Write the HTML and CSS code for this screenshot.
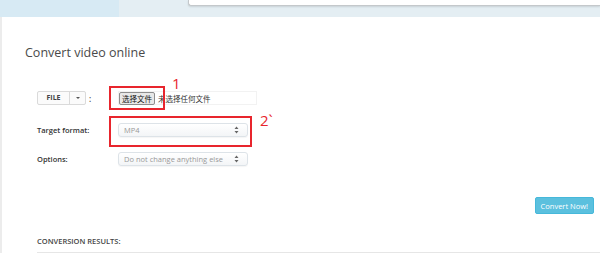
FILE: index.html
```html
<!DOCTYPE html>
<html lang="en">
<head>
  <meta charset="UTF-8" />
  <meta name="viewport" content="width=device-width, initial-scale=1" />
  <title>Convert video online</title>
  <link rel="stylesheet" href="styles.css">
</head>
<body>
  <div class="topbar">
    <div class="topbar-left"></div>
    <div class="topbar-right">
      <div class="search-box"></div>
    </div>
  </div>

  <div class="main">
    <h1 class="page-title">Convert video online</h1>

    <div class="convert-form">
      <div class="form-row row-file">
        <div class="form-label">
          <div class="split-btn">
            <span class="split-main">FILE</span>
            <span class="split-caret"><span class="caret"></span></span>
          </div>
          <span class="colon">:</span>
        </div>
        <div class="file-input">
          <span class="file-btn">选择文件</span>
          <span class="file-name">未选择任何文件</span>
        </div>
      </div>

      <div class="form-row row-target">
        <label class="form-label">Target format:</label>
        <div class="select">
          <span>MP4</span>
          <svg class="select-arrow" width="5" height="8" viewBox="0 0 5 8"><path d="M0.5 3 L2.5 0.5 L4.5 3 Z M0.5 5 L2.5 7.5 L4.5 5 Z" fill="#666"/></svg>
        </div>
      </div>

      <div class="form-row row-options">
        <label class="form-label">Options:</label>
        <div class="select">
          <span>Do not change anything else</span>
          <svg class="select-arrow" width="5" height="8" viewBox="0 0 5 8"><path d="M0.5 3 L2.5 0.5 L4.5 3 Z M0.5 5 L2.5 7.5 L4.5 5 Z" fill="#666"/></svg>
        </div>
      </div>

      <!-- annotations drawn on top of the form -->
      <div class="mark mark-1"></div>
      <span class="mark-num num-1">1</span>
      <div class="mark mark-2"></div>
      <span class="mark-num num-2">2`</span>
    </div>

    <div class="actions">
      <button class="convert-btn">Convert Now!</button>
    </div>

    <div class="results">
      <h4>Conversion results:</h4>
    </div>
  </div>
</body>
</html>
```

FILE: styles.css
```css
* {
  margin: 0;
  padding: 0;
  box-sizing: border-box;
}

body {
  font-family: 'Open Sans', 'Noto Sans CJK SC', sans-serif;
  background-color: #fff;
  color: #333;
  overflow: hidden;
}

.topbar {
  display: flex;
  height: 17px;
}

.topbar-left {
  width: 119px;
  background-color: #d7eaf4;
}

.topbar-right {
  flex: 1;
  background-color: #e4eef3;
  padding-left: 69px;
}

.search-box {
  height: 6px;
  background: #fff;
  border: 1px solid #c4c8cb;
  border-top: none;
  border-right: none;
  border-bottom-left-radius: 3px;
  box-shadow: 0 1px 2px rgba(0, 0, 0, 0.12);
}

.main {
  border-left: 2px solid #ececec;
  padding: 26px 6px 0 23px;
  height: 236px;
}

.page-title {
  font-size: 12.5px;
  font-weight: 400;
  line-height: 20px;
  color: #4a4a4a;
}

.convert-form {
  position: relative;
  margin-top: 23px;
  padding-left: 12px;
}

.form-row {
  display: flex;
  align-items: center;
  height: 24px;
}

.row-target {
  margin-top: 8px;
}

.row-options {
  margin-top: 5px;
}

.form-label {
  display: flex;
  align-items: center;
  width: 81px;
  font-size: 7.5px;
  font-weight: 600;
  color: #333;
}

.split-btn {
  display: flex;
  height: 14px;
  border: 1px solid #dadada;
  border-radius: 2px;
  background: #fbfbfb;
}

.split-main {
  width: 32px;
  text-align: center;
  font-size: 7px;
  font-weight: 700;
  line-height: 12px;
  color: #444;
  border-right: 1px solid #dadada;
}

.split-caret {
  width: 15px;
  display: flex;
  align-items: center;
  justify-content: center;
}

.caret {
  border-left: 2px solid transparent;
  border-right: 2px solid transparent;
  border-top: 2px solid #555;
}

.colon {
  margin-left: 3px;
  font-size: 8px;
  color: #444;
}

.file-input {
  display: flex;
  align-items: center;
  width: 139px;
  height: 14px;
  border: 1px solid #f2f2f2;
  font-family: 'Noto Sans CJK SC', sans-serif;
  font-size: 7.5px;
  color: #333;
}

.file-btn {
  height: 13px;
  padding: 0 2px;
  line-height: 11px;
  border: 1px solid #8d8d8d;
  border-radius: 2px;
  background: #e8e8e8;
  color: #111;
}

.file-name {
  margin-left: 3px;
}

.select {
  display: flex;
  align-items: center;
  justify-content: space-between;
  width: 130px;
  height: 14px;
  padding: 0 8px 0 5px;
  border: 1px solid #dde3e8;
  border-radius: 3px;
  background: linear-gradient(#fff, #f3f5f7);
  box-shadow: 0 1px 1px rgba(0, 0, 0, 0.04);
  font-size: 7.5px;
  color: #999;
}

.mark {
  position: absolute;
  border: 2px solid #e8252d;
}

.mark-1 {
  left: 84px;
  top: 0;
  width: 56px;
  height: 24px;
}

.mark-2 {
  left: 84px;
  top: 30px;
  width: 143px;
  height: 31px;
}

.mark-num {
  position: absolute;
  color: #e8252d;
  font-size: 15px;
  line-height: 16px;
}

.num-1 {
  left: 147px;
  top: -11px;
}

.num-2 {
  left: 235px;
  top: 26px;
}

.actions {
  display: flex;
  justify-content: flex-end;
  margin-top: 26px;
}

.convert-btn {
  height: 17px;
  padding: 0 5px;
  border: 1px solid #46b8da;
  border-radius: 2px;
  background-color: #5bc0de;
  color: #fff;
  font-family: 'Open Sans', sans-serif;
  font-size: 7.5px;
}

.results {
  margin-top: 22px;
  padding-left: 12px;
}

.results h4 {
  font-size: 7.5px;
  font-weight: 600;
  text-transform: uppercase;
  color: #444;
  line-height: 10px;
  padding-bottom: 6px;
  border-bottom: 1px solid #e6e6e6;
  margin-right: -6px;
}
```
